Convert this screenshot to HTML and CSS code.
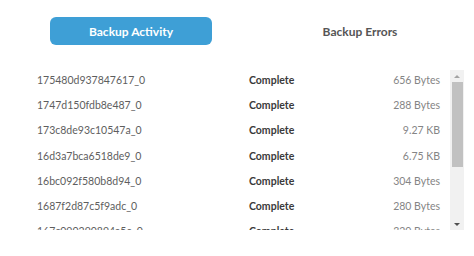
FILE: index.html
```html
<!DOCTYPE html>
<html>
<head>
<meta charset="utf-8">
<link rel="stylesheet" href="styles.css">
</head>
<body>
<div class="page">
  <div class="tabs">
    <div class="tab active">Backup Activity</div>
    <div class="tab">Backup Errors</div>
  </div>
  <div class="list">
    <div class="rows">
      <div class="row"><span class="id">175480d937847617_0</span><span class="status">Complete</span><span class="size">656 Bytes</span></div>
      <div class="row"><span class="id">1747d150fdb8e487_0</span><span class="status">Complete</span><span class="size">288 Bytes</span></div>
      <div class="row"><span class="id">173c8de93c10547a_0</span><span class="status">Complete</span><span class="size">9.27 KB</span></div>
      <div class="row"><span class="id">16d3a7bca6518de9_0</span><span class="status">Complete</span><span class="size">6.75 KB</span></div>
      <div class="row"><span class="id">16bc092f580b8d94_0</span><span class="status">Complete</span><span class="size">304 Bytes</span></div>
      <div class="row"><span class="id">1687f2d87c5f9adc_0</span><span class="status">Complete</span><span class="size">280 Bytes</span></div>
      <div class="row"><span class="id">167c090290894a5e_0</span><span class="status">Complete</span><span class="size">320 Bytes</span></div>
    </div>
    <div class="scrollbar">
      <div class="arrow up"></div>
      <div class="track"><div class="thumb"></div></div>
      <div class="arrow down"></div>
    </div>
  </div>
</div>
</body>
</html>
```

FILE: styles.css
```css
html, body {
  margin: 0;
  padding: 0;
  background: #ffffff;
}
.page {
  width: 474px;
  height: 256px;
  font-family: "Lato", "Open Sans", sans-serif;
  overflow: hidden;
}
.tabs {
  display: flex;
  gap: 67px;
  padding: 17px 0 0 50px;
}
.tab {
  width: 162px;
  height: 28px;
  border-radius: 6px;
  display: flex;
  align-items: center;
  justify-content: center;
  font-size: 12px;
  font-weight: 700;
  color: #555555;
}
.tab.active {
  background: #3e9fd6;
  color: #ffffff;
}
.list {
  margin: 22px 0 0 25px;
  width: 439px;
  height: 163px;
  display: flex;
}
.rows {
  flex: 1;
  overflow: hidden;
}
.row {
  height: 25.3px;
  display: grid;
  grid-template-columns: 212px 1fr auto;
  align-items: center;
  padding: 0 10px 0 12px;
  font-size: 10.5px;
}
.id {
  color: #5e5e5e;
}
.status {
  color: #3a3a3a;
  font-weight: 700;
}
.size {
  color: #858585;
}
.scrollbar {
  width: 14px;
  margin-top: 3px;
  background: #f1f1f1;
  display: flex;
  flex-direction: column;
  align-items: center;
}
.arrow {
  height: 12px;
  width: 14px;
  display: flex;
  align-items: center;
  justify-content: center;
}
.arrow::after {
  content: "";
  border-left: 3px solid transparent;
  border-right: 3px solid transparent;
}
.arrow.up::after {
  border-bottom: 3px solid #a3a3a3;
}
.arrow.down::after {
  border-top: 3px solid #505050;
}
.track {
  flex: 1;
  width: 14px;
  display: flex;
  justify-content: center;
}
.thumb {
  width: 11px;
  height: 85px;
  background: #c1c1c1;
}
```
